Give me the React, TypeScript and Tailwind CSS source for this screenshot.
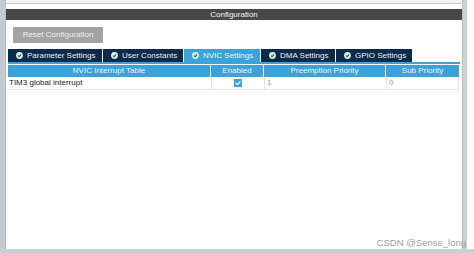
import React from "react";

function TabIcon() {
  return (
    <svg width="7" height="7" viewBox="0 0 8 8" className="shrink-0">
      <circle cx="4" cy="4" r="3.9" fill="#d8f3e4" />
      <path d="M2.2 4.1 L3.5 5.3 L5.9 2.8" stroke="#1f6a4a" strokeWidth="1.3" fill="none" />
    </svg>
  );
}

function Tab({ label, active, w }: { label: string; active?: boolean; w: string }) {
  return (
    <div
      className={`${w} h-[13px] flex items-center gap-[4px] pl-[8px] whitespace-nowrap ${
        active ? "bg-[#3ba3d9] text-[#e6f4fb]" : "bg-[#0c2a4c] text-[#e8edf2]"
      }`}
    >
      <TabIcon />
      <span>{label}</span>
    </div>
  );
}

export default function App() {
  return (
    <div className="relative w-[474px] h-[253px] bg-white flex flex-col overflow-hidden font-['Liberation_Sans',Arial,sans-serif] text-[8px] leading-none">
      <div className="flex flex-1">
        <div className="w-[6px] bg-[#c3cbcf] border-r border-[#b4bcc0]" />
        <div className="flex-1 flex flex-col">
          <div className="h-[4px] bg-[#f1f3f4] border-b border-[#c8ced1]" />
          <div className="h-[5px]" />
          <div className="h-[11px] bg-[#484848] text-[#f2f2f2] flex items-center justify-center">
            Configuration
          </div>
          <div className="h-[7px]" />
          <div className="pl-[7px]">
            <div className="w-[90px] h-[16px] bg-[#a3a3a3] text-[#eeeeee] flex items-center justify-center whitespace-nowrap">
              Reset Configuration
            </div>
          </div>
          <div className="h-[6px]" />
          <div className="pl-[2px] pr-[1px]">
            <div className="flex gap-[1px]">
              <Tab label="Parameter Settings" w="w-[94px]" />
              <Tab label="User Constants" w="w-[80px]" />
              <Tab label="NVIC Settings" w="w-[76px]" active />
              <Tab label="DMA Settings" w="w-[74px]" />
              <Tab label="GPIO Settings" w="w-[76px]" />
            </div>
            <div className="h-[2px] bg-[#3ba3d9] mr-[1px]" />
            <div className="h-[1px]" />
            <div className="flex gap-[1px] h-[12px] text-[#eaf5fb] mr-[2px] whitespace-nowrap">
              <div className="w-[202px] bg-[#3ba3d9] flex items-center justify-center">NVIC Interrupt Table</div>
              <div className="w-[52px] bg-[#3ba3d9] flex items-center justify-center">Enabled</div>
              <div className="w-[121px] bg-[#3ba3d9] flex items-center justify-center">Preemption Priority</div>
              <div className="flex-1 bg-[#3ba3d9] flex items-center justify-center">Sub Priority</div>
            </div>
            <div className="flex h-[13px] border-b border-[#e2e6e8] mr-[2px]">
              <div className="w-[203px] flex items-center pl-[1px] text-[#222]">TIM3 global interrupt</div>
              <div className="w-[53px] border-l border-[#e2e6e8] flex items-center justify-center">
                <svg width="8" height="8" viewBox="0 0 8 8">
                  <rect width="8" height="8" fill="#3ba3d9" />
                  <path d="M1.6 4 L3.3 5.6 L6.4 2.3" stroke="#fff" strokeWidth="1.2" fill="none" />
                </svg>
              </div>
              <div className="w-[122px] border-l border-[#e2e6e8] flex items-center pl-[2px] text-[#9a9a9a]">1</div>
              <div className="flex-1 border-l border-[#e2e6e8] border-r flex items-center pl-[2px] text-[#9a9a9a]">0</div>
            </div>
          </div>
        </div>
        <div className="w-[5px] bg-[#c9d1d5] border-l border-[#b9c1c5]" />
        <div className="w-[7px] bg-white" />
      </div>
      <div className="h-[4px] bg-[#c9d1d5]" />
      <span className="absolute right-[8px] bottom-[6px] text-[9.5px] text-[#9aa0a4] whitespace-nowrap">
        CSDN @Sense_long
      </span>
    </div>
  );
}
